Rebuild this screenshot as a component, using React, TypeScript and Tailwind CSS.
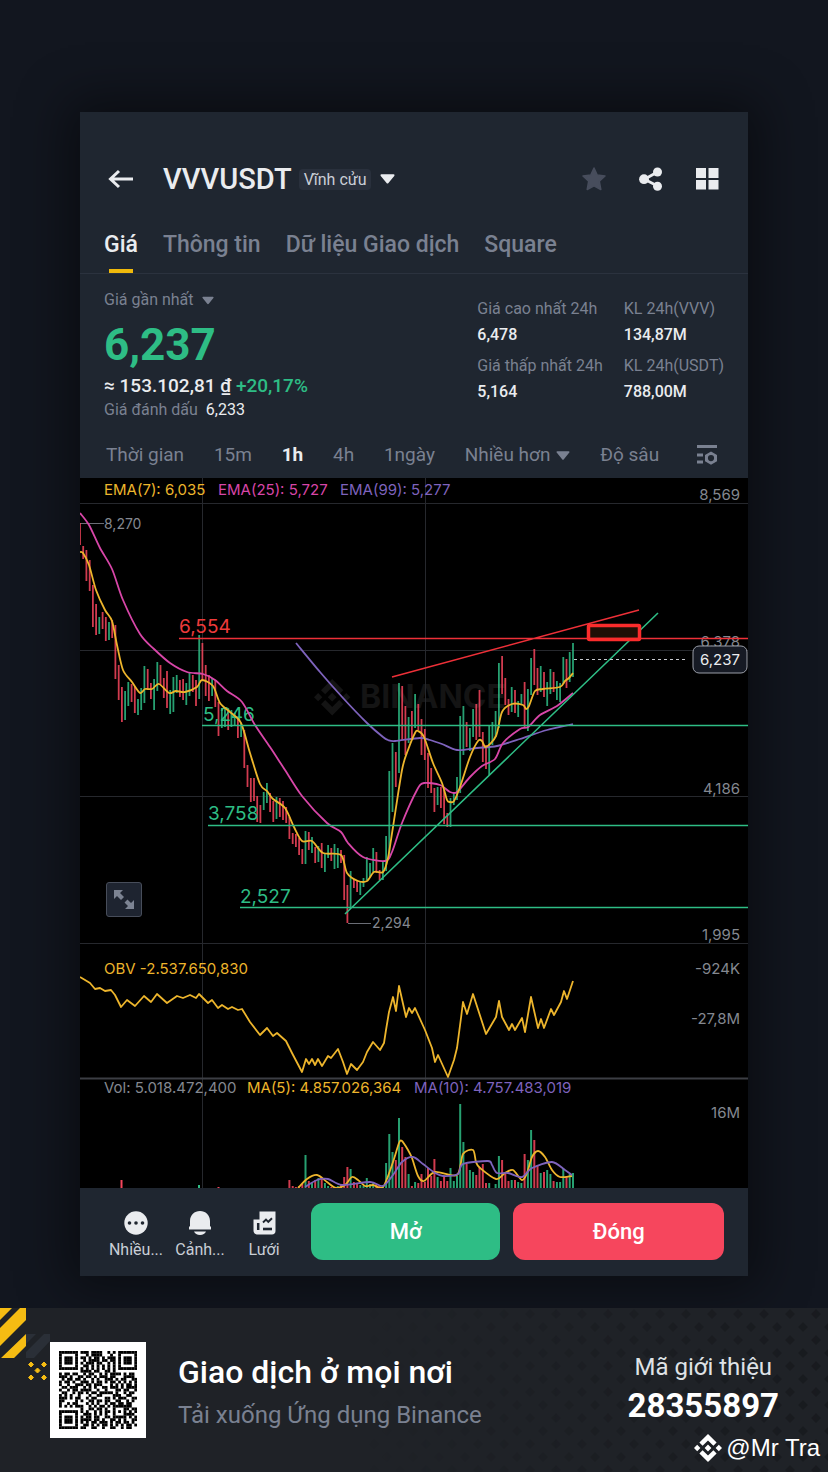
import React from 'react';

type Candle = [high: number, low: number, up: 0 | 1];
type Point = [x: number, y: number];

const CANDLE_STEP = 3.222;
const GREEN = '#2ebd85';
const RED = '#f6465d';
const YELLOW = '#edb52c';
const PINK = '#d846a8';
const PURPLE = '#7e63bd';

const candles: Candle[] = [
  [45, 67, 0], [68, 81, 0], [72, 103, 0], [82, 113, 0], [107, 149, 0], [126, 157, 0], [139, 156, 1], [134, 151, 0],
  [139, 163, 0], [144, 162, 1], [142, 160, 0], [147, 201, 0], [187, 222, 0], [209, 244, 0], [213, 242, 1], [204, 228, 1],
  [206, 224, 0], [209, 235, 0], [221, 237, 1], [210, 232, 1], [188, 225, 1], [191, 212, 0], [205, 221, 0], [201, 232, 1],
  [184, 213, 1], [187, 207, 0], [200, 220, 0], [193, 230, 0], [212, 236, 1], [199, 234, 1], [197, 215, 1], [202, 219, 0],
  [201, 222, 0], [205, 227, 1], [194, 218, 1], [197, 214, 0], [202, 228, 0], [157, 221, 1], [165, 202, 0], [187, 218, 0],
  [197, 223, 0], [200, 218, 1], [202, 229, 0], [224, 258, 0], [230, 250, 1], [229, 249, 1], [230, 252, 0], [232, 249, 1],
  [235, 247, 1], [239, 260, 0], [245, 259, 1], [252, 290, 0], [287, 309, 0], [300, 324, 0], [300, 323, 0], [318, 344, 0],
  [327, 345, 0], [314, 332, 1], [305, 325, 1], [315, 334, 0], [323, 344, 0], [319, 341, 1], [320, 339, 0], [323, 342, 0],
  [329, 345, 0], [339, 361, 0], [355, 366, 0], [356, 369, 0], [360, 377, 0], [371, 386, 0], [353, 386, 1], [354, 372, 0],
  [359, 375, 1], [369, 385, 0], [368, 384, 1], [365, 390, 0], [376, 394, 1], [367, 380, 1], [370, 383, 0], [366, 391, 1],
  [370, 390, 1], [372, 385, 0], [377, 422, 0], [407, 445, 0], [393, 430, 1], [401, 410, 0], [403, 414, 0], [404, 417, 1],
  [400, 409, 1], [379, 402, 1], [385, 399, 1], [370, 394, 1], [374, 395, 0], [392, 402, 0], [384, 402, 1], [358, 393, 1],
  [293, 380, 1], [265, 334, 1], [274, 309, 0], [205, 295, 1], [208, 262, 0], [228, 277, 0], [239, 265, 1], [233, 262, 0],
  [216, 250, 1], [226, 252, 0], [241, 277, 0], [251, 282, 0], [275, 310, 0], [290, 315, 0], [310, 334, 0], [309, 327, 1],
  [309, 330, 0], [312, 346, 0], [335, 349, 0], [320, 349, 1], [314, 327, 1], [299, 322, 1], [238, 315, 1], [228, 277, 1],
  [244, 269, 0], [250, 273, 1], [231, 259, 1], [226, 262, 0], [212, 259, 0], [254, 284, 0], [267, 291, 0], [248, 297, 1],
  [244, 267, 1], [233, 259, 1], [185, 250, 1], [178, 216, 0], [200, 227, 0], [221, 237, 0], [209, 234, 1], [212, 235, 0],
  [223, 239, 1], [216, 227, 1], [204, 250, 0], [211, 253, 1], [180, 217, 1], [171, 207, 0], [190, 217, 0], [188, 214, 1],
  [194, 219, 0], [204, 228, 1], [191, 216, 1], [194, 214, 0], [203, 222, 1], [205, 224, 1], [179, 206, 1], [181, 210, 0],
  [174, 204, 1], [165, 199, 1],
];

// bar heights, starting at candle VOLUME_START
const VOLUME_START = 65;
const volumes = [
  8, 2, 1, 2, 4, 33, 7, 5, 8, 10, 9, 5, 2, 1, 1, 2, 3, 11, 21, 19, 6, 4, 3, 2, 10, 4, 5, 4, 3, 3, 25, 54, 36, 28, 70,
  41, 31, 14, 2, 6, 5, 14, 6, 20, 12, 29, 11, 7, 11, 7, 20, 7, 12, 84, 46, 24, 18, 16, 13, 21, 24, 5, 5, 0, 4, 32, 28,
  14, 7, 8, 8, 6, 5, 34, 28, 58, 48, 23, 15, 16, 18, 14, 7, 6, 6, 20, 12, 14, 15,
];

const ema7: Point[] = [
  [0, 74], [3, 75], [9, 87], [16, 112], [25, 132], [32, 143], [37, 167], [43, 192], [52, 204], [60, 215], [65, 211],
  [72, 211], [79, 206], [89, 215], [96, 213], [105, 214], [117, 209], [122, 202], [133, 208], [140, 225], [150, 234],
  [161, 245], [170, 275], [180, 306], [187, 313], [193, 321], [205, 330], [214, 349], [222, 363], [232, 363], [243, 375],
  [261, 377], [267, 395], [278, 403], [287, 403], [294, 394], [303, 394], [308, 380], [313, 349], [322, 292], [328, 272],
  [335, 255], [338, 253], [344, 259], [353, 285], [362, 305], [367, 322], [370, 324], [374, 323], [380, 309], [390, 279],
  [398, 263], [402, 263], [406, 269], [416, 258], [422, 234], [432, 226], [443, 227], [446, 231], [449, 228], [455, 213],
  [463, 211], [480, 209], [485, 203], [489, 200], [493, 195],
];

const ema25: Point[] = [
  [0, 35], [9, 47], [20, 70], [32, 91], [43, 122], [60, 156], [74, 171], [90, 185], [107, 194], [123, 196], [135, 202],
  [147, 213], [162, 224], [175, 247], [190, 269], [205, 292], [222, 318], [247, 345], [261, 354], [268, 365], [283, 379],
  [305, 383], [312, 374], [322, 345], [337, 312], [344, 305], [360, 307], [370, 314], [377, 314], [390, 299], [402, 288],
  [415, 281], [423, 265], [440, 251], [448, 249], [460, 237], [477, 228], [493, 215],
];

const ema99: Point[] = [
  [216, 165], [240, 194], [263, 220], [287, 245], [303, 259], [308, 262], [315, 263], [340, 260], [350, 262], [362, 266],
  [377, 272], [397, 270], [417, 268], [440, 261], [467, 252], [493, 246],
];

const obv: Point[] = [
  [0, 499], [10, 505], [15, 511], [20, 510], [25, 513], [31, 512], [35, 517], [41, 529], [47, 522], [55, 528], [64, 518],
  [71, 524], [77, 516], [87, 525], [97, 518], [103, 520], [110, 517], [116, 520], [119, 516], [128, 525], [132, 522],
  [138, 530], [142, 527], [148, 531], [152, 529], [158, 532], [162, 531], [170, 544], [180, 557], [187, 550], [193, 558],
  [197, 555], [206, 563], [212, 575], [222, 594], [226, 581], [229, 586], [232, 581], [235, 587], [238, 581], [242, 588],
  [248, 578], [251, 580], [258, 571], [263, 584], [267, 596], [271, 586], [277, 592], [283, 584], [287, 574], [293, 564],
  [300, 572], [304, 565], [306, 552], [309, 534], [313, 519], [316, 533], [319, 508], [326, 539], [329, 530], [332, 535],
  [335, 530], [345, 552], [352, 570], [355, 584], [358, 577], [368, 599], [374, 582], [377, 570], [381, 540], [383, 524],
  [387, 536], [393, 516], [406, 556], [416, 539], [419, 523], [422, 539], [429, 552], [432, 546], [435, 552], [442, 540],
  [445, 554], [451, 519], [458, 550], [461, 541], [464, 550], [471, 531], [474, 537], [481, 524], [484, 513], [487, 521],
  [493, 503],
];

const volMa5: Point[] = [
  [218, 710], [227, 701], [237, 697], [247, 704], [256, 710], [265, 707], [272, 699], [278, 702], [285, 708], [293, 707],
  [303, 709], [313, 684], [319, 665], [322, 663], [328, 672], [332, 680], [338, 698], [344, 703], [355, 694], [377, 697],
  [383, 676], [393, 672], [396, 684], [400, 690], [416, 701], [425, 695], [433, 692], [442, 702], [447, 695], [452, 679],
  [458, 673], [465, 679], [472, 692], [480, 699], [492, 698],
];

const volMa10: Point[] = [
  [225, 709], [237, 702], [248, 701], [262, 707], [290, 704], [303, 708], [313, 697], [322, 684], [333, 679], [343, 686],
  [355, 695], [363, 698], [378, 696], [383, 686], [408, 683], [412, 687], [417, 695], [428, 695], [442, 699], [452, 690],
  [472, 684], [485, 692], [492, 697],
];

const qrRows = [
  '#######.###.####..#.#.#######',
  '#.....#...#.####...#..#.....#',
  '#.###.#.##.#.##.#.###.#.###.#',
  '#.###.#..#.####.##.##.#.###.#',
  '#.###.#.#.###.##..#.#.#.###.#',
  '#.....#..##.#.#.#.#.#.#.....#',
  '#######.#.#.#.#.#.#.#.#######',
  '........####.##..##.#........',
  '#.##.##..#.##..#.#.####.#.##.',
  '###.#..##.##.#.###.##...####.',
  '.#.##.##.#..#.#..###.#.##..##',
  '#.##.#..###.#.##.#.##.#.#.#.#',
  '#..#..###.##.###...#.#.#.##.#',
  '.##.###..#.#.#..##.###.#.####',
  '#..#.##.####..#..#...##.##..#',
  '.##..#.##.#.##.#####.#..#.##.',
  '#.#.#..#...#..##....###..##..',
  '###.#.##..#.##...##.#.###..##',
  '##....#.#..##.##.##..##..#.#.',
  '#..#.##...#.#.#..#.##.##.##..',
  '#.#.#.###..#.#.##.#.#######..',
  '........#..##.##.#..#...##.##',
  '#######.#.#..#.#.##.#.#.#.#.#',
  '#.....#..###.#.#.#..#...####.',
  '#.###.#.#.##.##..##.#####.#.#',
  '#.###.#.####.##.#..##.#.#..##',
  '#.###.#.#.#.##.###.#.##.##.#.',
  '#.....#..##.#.#.##.#.#.#.##.#',
  '#######.##..##..#..##..#.##..',
];

const stats = [
  { label: 'Giá cao nhất 24h', value: '6,478' },
  { label: 'KL 24h(VVV)', value: '134,87M' },
  { label: 'Giá thấp nhất 24h', value: '5,164' },
  { label: 'KL 24h(USDT)', value: '788,00M' },
];

const toPoints = (points: Point[]) => points.map((p) => p.join(',')).join(' ');

// Catmull-Rom through the points, written as cubic beziers
const toCurve = (points: Point[]) => {
  let d = `M${points[0].join(' ')}`;
  for (let i = 0; i < points.length - 1; i++) {
    const p0 = points[i - 1] ?? points[i];
    const p1 = points[i];
    const p2 = points[i + 1];
    const p3 = points[i + 2] ?? p2;
    const c1 = [p1[0] + (p2[0] - p0[0]) / 7, p1[1] + (p2[1] - p0[1]) / 7];
    const c2 = [p2[0] - (p3[0] - p1[0]) / 7, p2[1] - (p3[1] - p1[1]) / 7];
    d += `C${[...c1, ...c2, ...p2].map((n) => n.toFixed(1)).join(' ')}`;
  }
  return d;
};

const Caret: React.FC<{ className: string }> = ({ className }) => (
  <svg viewBox="0 0 16 12" className={className} fill="currentColor" aria-hidden="true">
    <path d="M1.500 1h13c1 0 1.300 1 .7 1.700l-6.200 7.600c-.6.8-1.500.8-2 0L.8 2.700C.2 2 .5 1 1.500 1z" />
  </svg>
);

const BinanceMark: React.FC = () => (
  <svg viewBox="0 0 28 28" width="28" height="28" fill="currentColor" aria-hidden="true">
    <path d="M14 0l8.600 8.600-3.200 3.200L14 6.400l-5.400 5.400-3.200-3.200z" />
    <path d="M14 28l8.600-8.600-3.200-3.200-5.400 5.400-5.400-5.400-3.200 3.200z" />
    <path d="M3.200 10.800L6.400 14l-3.200 3.200L0 14zM24.800 10.800L28 14l-3.200 3.200-3.200-3.200zM14 10.600l3.400 3.400-3.400 3.400-3.400-3.400z" />
  </svg>
);

const Header: React.FC = () => (
  <header className="flex h-12 items-center pl-7 pr-[29px] text-[#eaecef]">
    <button type="button" aria-label="Quay lại">
      <svg viewBox="0 0 26 20" className="h-5 w-[26px]" fill="none" stroke="currentColor" strokeWidth="3">
        <path d="M25 10H3M11 2L2.500 10l8.500 8" />
      </svg>
    </button>
    <h1 className="ml-[29px] pt-0.5 text-[29px] font-medium">VVVUSDT</h1>
    <button type="button" className="ml-[7px] flex items-center gap-[9px]">
      <span className="rounded-sm bg-[#29303c] px-[5px] text-[16px] leading-[21px] text-[#c9ced6]">Vĩnh cửu</span>
      <Caret className="h-3 w-[15px]" />
    </button>
    <div className="ml-auto flex items-center gap-[33px]">
      <button type="button" aria-label="Yêu thích" className="text-[#474d5c]">
        <svg viewBox="0 0 24 24" className="size-6" fill="currentColor" stroke="currentColor" strokeWidth="1.500" strokeLinejoin="round">
          <path d="M12 1l3.200 7 7.800.9-5.700 5.300 1.500 8.300L12 18.900l-6.800 3.600 1.500-8.300L1 8.900 8.800 8z" />
        </svg>
      </button>
      <button type="button" aria-label="Chia sẻ">
        <svg viewBox="0 0 24 24" className="size-6" fill="currentColor" stroke="currentColor">
          <path d="M18.500 5L5.500 12.200l13 6.800" fill="none" strokeWidth="2.800" />
          <circle cx="18.500" cy="5" r="4.500" stroke="none" />
          <circle cx="5" cy="12.200" r="4.900" stroke="none" />
          <circle cx="18.500" cy="19.200" r="4.500" stroke="none" />
        </svg>
      </button>
      <button type="button" aria-label="Bố cục">
        <svg viewBox="0 0 23 22" className="h-[22px] w-[23px]" fill="currentColor">
          <path d="M0 0h10v10H0zM12.500 0h10v10h-10zM0 12h10v9.500H0zM12.500 12h10v9.500h-10z" />
        </svg>
      </button>
    </div>
  </header>
);

const Tabs: React.FC = () => (
  <nav className="mt-7 flex gap-[25px] border-b border-[#2b323e] pl-6 text-[23px] font-medium leading-7 text-[#7a8191]">
    <a href="#gia" className="flex flex-col items-center text-[#eaecef]">
      Giá
      <span className="mt-2.5 h-1 w-6 bg-[#f0b90b]" />
    </a>
    <a href="#thong-tin">Thông tin</a>
    <a href="#du-lieu">Dữ liệu Giao dịch</a>
    <a href="#square">Square</a>
  </nav>
);

const PriceSummary: React.FC = () => (
  <section className="flex justify-between pl-6 pr-6 pt-4 text-[16px] leading-5 text-[#7a8191]">
    <div>
      <button type="button" className="flex items-center gap-2">
        Giá gần nhất
        <Caret className="h-[9px] w-3" />
      </button>
      <p className="mt-3 text-[44px] font-bold leading-[46px] text-[#2ebd85]">6,237</p>
      <p className="mt-1.5 text-[19px] font-medium leading-6 text-[#eaecef]">
        ≈ 153.102,81 ₫ <span className="text-[#2ebd85]">+20,17%</span>
      </p>
      <p className="mt-0.5">
        Giá đánh dấu <span className="ml-1 text-[#eaecef]">6,233</span>
      </p>
    </div>
    <dl className="mt-[9px] grid grid-cols-[auto_auto] content-start gap-x-[21px] gap-y-[11px]">
      {stats.map((stat) => (
        <div key={stat.label}>
          <dt>{stat.label}</dt>
          <dd className="mt-1.5 font-medium text-[#eaecef]">{stat.value}</dd>
        </div>
      ))}
    </dl>
  </section>
);

const Intervals: React.FC = () => (
  <div className="mt-[23px] flex items-center justify-between pb-[11px] pl-[26px] pr-[30px] text-[19px] leading-6 text-[#7a8191]">
    <button type="button">Thời gian</button>
    <button type="button">15m</button>
    <button type="button" className="font-bold text-[#eaecef]">1h</button>
    <button type="button">4h</button>
    <button type="button">1ngày</button>
    <button type="button" className="flex items-center gap-1.5">
      Nhiều hơn
      <Caret className="h-[11px] w-3.5" />
    </button>
    <button type="button">Độ sâu</button>
    <button type="button" aria-label="Cài đặt biểu đồ" className="ml-2">
      <svg viewBox="0 0 21 20" className="h-5 w-[21px]" fill="currentColor">
        <path d="M0 0h20v3H0zM0 8.500h6v3H0zM0 15.500h6v3H0z" />
        <path
          fillRule="evenodd"
          d="M14 6.500l6 3.400v6.400l-6 3.500-6-3.500V9.900zM14 10a3.100 3.100 0 100 6.200 3.100 3.100 0 000-6.200z"
        />
      </svg>
    </button>
  </div>
);

const Chart: React.FC = () => (
  <svg viewBox="0 0 668 710" className="block w-full bg-black font-[family-name:Inter,sans-serif] text-[15px]" role="img" aria-label="Biểu đồ VVVUSDT 1h">
    <g fill="#141414">
      <g transform="translate(234 201) scale(1.300)">
        <path d="M14 0l8.600 8.600-3.200 3.200L14 6.400l-5.400 5.400-3.200-3.200zM14 28l8.600-8.600-3.200-3.200-5.400 5.400-5.400-5.400-3.200 3.200zM3.200 10.800L6.400 14l-3.200 3.200L0 14zM24.800 10.800L28 14l-3.200 3.200-3.200-3.200zM14 10.600l3.400 3.400-3.400 3.400-3.400-3.400z" />
      </g>
      <text x="280" y="230" className="text-[32px] font-bold">BINANCE</text>
    </g>

    <g stroke="#26282d">
      <path d="M122.500 0V710M345.500 0V710M0 25.500H668M0 172.500H668M0 318.500H668M0 465.500H668" />
      <path d="M0 600.500H668" stroke="#3c3e44" strokeWidth="2" />
    </g>

    <g fill="#848890" textAnchor="end">
      <text x="660" y="22">8,569</text>
      <text x="660" y="169">6,378</text>
      <text x="660" y="316">4,186</text>
      <text x="660" y="462">1,995</text>
      <text x="660" y="496">-924K</text>
      <text x="660" y="546">-27,8M</text>
      <text x="660" y="640">16M</text>
    </g>

    <text x="24" y="17" fill={YELLOW}>EMA(7): 6,035</text>
    <text x="138" y="17" fill={PINK}>EMA(25): 5,727</text>
    <text x="260" y="17" fill={PURPLE}>EMA(99): 5,277</text>

    <g fill="#848890" className="text-[14px]">
      <path d="M0 45.500H24M268 445.500H291" stroke="#6a6d75" />
      <text x="24" y="51">8,270</text>
      <text x="292" y="450">2,294</text>
    </g>

    <g strokeWidth="1.800">
      {candles.map(([high, low, up], i) => (
        <path
          key={i}
          d={`M${(i * CANDLE_STEP).toFixed(1)} ${high}V${low}`}
          stroke={up ? GREEN : RED}
          opacity="0.85"
        />
      ))}
    </g>

    <g className="text-[19px]">
      <text x="99" y="155" fill="#ee3b3b">6,554</text>
      <text x="123" y="243" fill={GREEN}>5,246</text>
      <text x="128" y="342" fill={GREEN}>3,758</text>
      <text x="160" y="425" fill={GREEN}>2,527</text>
    </g>

    <g fill="none" strokeWidth="1.800" strokeLinejoin="round">
      <path d={toCurve(ema99)} stroke={PURPLE} />
      <path d={toCurve(ema25)} stroke={PINK} />
      <path d={toCurve(ema7)} stroke={YELLOW} />
      <polyline points={toPoints(obv)} stroke={YELLOW} />
    </g>

    <g stroke={GREEN} strokeWidth="1.600">
      <path d="M122 247.500H668M128 347.500H668M160 429.500H668M265 436L578 135" />
    </g>
    <rect x="508.500" y="147.500" width="51" height="14" fill="#1f0f06" />
    <g stroke="#ee3038" strokeWidth="1.600">
      <path d="M99 160.500H668M312 199L559 132" />
    </g>
    <rect x="508.500" y="147.500" width="51" height="14" rx="1" fill="none" stroke="#fb2c2c" strokeWidth="3.500" />

    <path d="M494 181.500H608" stroke="#c8cad0" strokeDasharray="3 3" />
    <rect x="613" y="168" width="54" height="27" rx="6" fill="#161a24" stroke="#9a9ea8" />
    <text x="640" y="187" fill="#eaecef" textAnchor="middle">6,237</text>

    <text x="24" y="496" fill={YELLOW}>OBV -2.537.650,830</text>
    <text x="24" y="615" fill="#848890">Vol: 5.018.472,400</text>
    <text x="167" y="615" fill={YELLOW}>MA(5): 4.857.026,364</text>
    <text x="334" y="615" fill={PURPLE}>MA(10): 4.757.483,019</text>

    <g strokeWidth="2">
      <path d="M41.500 702V710" stroke={RED} />
      <path d="M119 707V710" stroke={GREEN} />
      <path d="M138.500 709V710" stroke={RED} />
      {volumes.map((height, i) => (
        <path
          key={i}
          d={`M${((i + VOLUME_START) * CANDLE_STEP).toFixed(1)} ${710 - height}V710`}
          stroke={candles[i + VOLUME_START][2] ? GREEN : RED}
          opacity="0.85"
        />
      ))}
    </g>
    <g fill="none" strokeWidth="1.800" strokeLinejoin="round">
      <path d={toCurve(volMa5)} stroke={YELLOW} />
      <path d={toCurve(volMa10)} stroke={PURPLE} />
    </g>

    <g transform="translate(26 404)">
      <rect x="0.500" y="0.500" width="35" height="34" rx="2.500" fill="#1e2430" stroke="#474d5a" />
      <path fill="#7c8392" d="M8 8h9l-3 3 4 4-3 3-4-4-3 3zM28 27h-9l3-3-3.500-3.500 3-3L25 21l3-3z" />
    </g>
  </svg>
);

const ActionBar: React.FC = () => (
  <footer className="flex items-end px-6 pb-4 pt-[15px] text-[16px] leading-5 text-[#c9ced6]">
    <button type="button" className="flex w-16 flex-col items-center gap-[5px]">
      <svg viewBox="0 0 24 24" className="size-6" fill="#eaecef">
        <circle cx="12" cy="12" r="11.700" />
        <g fill="#1f2630">
          <circle cx="5.500" cy="12" r="1.800" />
          <circle cx="12" cy="12" r="1.800" />
          <circle cx="18.500" cy="12" r="1.800" />
        </g>
      </svg>
      Nhiều...
    </button>
    <button type="button" className="flex w-16 flex-col items-center gap-[5px]">
      <svg viewBox="0 0 24 24" className="size-6" fill="#eaecef">
        <path d="M1 18.500v-3h1V10C2 4 6.500 0 12 0s10 4 10 10v5.500h1v3zM6 20.500h12c-1 2-3 3.500-6 3.500s-5-1.500-6-3.500z" />
      </svg>
      Cảnh...
    </button>
    <button type="button" className="flex w-16 flex-col items-center gap-[5px]">
      <svg viewBox="0 0 24 24" className="size-6" fill="#eaecef">
        <path d="M7.500.5h16V20c0 2-1.300 3.500-3.500 3.500H6C3 23.500 1.500 22 1.500 19.500V8.500h6z" />
        <g fill="none" stroke="#1f2630">
          <path d="M6.200 12v7" strokeWidth="2.500" />
          <path d="M11 18h9" strokeWidth="2.600" />
          <path d="M11 11.500l3-3 2.300 2.300L20 7.200" strokeWidth="1.900" />
        </g>
      </svg>
      Lưới
    </button>
    <button type="button" className="ml-[15px] h-[57px] flex-[9] rounded-xl bg-[#2ebd85] text-[22px] font-medium text-white">
      Mở
    </button>
    <button type="button" className="ml-[13px] h-[57px] flex-[10] rounded-xl bg-[#f6465d] text-[22px] font-medium text-white">
      Đóng
    </button>
  </footer>
);

const QrCode: React.FC = () => (
  <svg viewBox="0 0 29 29" className="size-[78px]" role="img" aria-label="QR">
    {qrRows.map((row, y) =>
      row.split('').map((cell, x) => (cell === '#' ? <rect key={`${x}-${y}`} x={x} y={y} width="1.050" height="1.050" /> : null)),
    )}
  </svg>
);

const Banner: React.FC = () => (
  <section className="relative mt-8 flex h-[164px] items-center overflow-hidden bg-[#1f2227] pl-[50px] pr-[49px]">
    <svg className="absolute inset-y-0 right-0 h-full w-[460px]" aria-hidden="true">
      <defs>
        <pattern id="dots" width="26" height="26" patternUnits="userSpaceOnUse">
          <path d="M6 1l5 5-5 5-5-5zM19 14l5 5-5 5-5-5z" fill="#17191d" />
        </pattern>
        <linearGradient id="fade">
          <stop offset="0" stopColor="#fff" stopOpacity="0" />
          <stop offset="1" stopColor="#fff" stopOpacity="0.800" />
        </linearGradient>
        <mask id="fadeMask">
          <rect width="100%" height="100%" fill="url(#fade)" />
        </mask>
      </defs>
      <rect width="100%" height="100%" fill="url(#dots)" mask="url(#fadeMask)" />
    </svg>
    <svg viewBox="0 0 50 80" className="absolute left-0 top-0 h-20 w-[50px]" aria-hidden="true">
      <g fill="#f5bc13">
        <path d="M0 0h12L0 12zM20 0h6v12L0 38V20zM26 26v12L14 50H1z" />
        <path
          d="M31 54l2.500 2.500L31 59l-2.500-2.500zM44 54l2.500 2.500L44 59l-2.500-2.500zM37.500 60l2.500 2.500-2.500 2.500-2.500-2.500zM31 67l2.500 2.500L31 72l-2.500-2.500zM44 67l2.500 2.500L44 72l-2.500-2.500z"
          stroke="#f5bc13"
          strokeLinejoin="round"
        />
      </g>
      <path d="M26 26h10L26 36zM44 26h6v7L34 50h-8v-6z" fill="#2a2f37" />
    </svg>
    <div className="relative bg-white p-[9px]">
      <QrCode />
    </div>
    <div className="relative ml-8 pt-1.5">
      <h2 className="text-[32px] font-medium leading-10 text-white">Giao dịch ở mọi nơi</h2>
      <p className="mt-1 text-[24px] leading-[38px] text-[#7a8191]">Tải xuống Ứng dụng Binance</p>
    </div>
    <div className="relative ml-auto text-center text-white">
      <p className="text-[24px] leading-8 text-[#dfe2e6]">Mã giới thiệu</p>
      <p className="text-[33px] font-bold leading-[46px]">28355897</p>
    </div>
    <p className="absolute bottom-2 right-2 flex items-center gap-1 font-[family-name:'Liberation_Sans',sans-serif] text-[24px] leading-8 text-white">
      <BinanceMark />
      @Mr Tra
    </p>
  </section>
);

const App: React.FC = () => (
  <div className="bg-[#12161f] pt-28 font-[family-name:Roboto,sans-serif]">
    <main className="mx-20 bg-[#1f2630] pt-[43px] shadow-[0_0_48px_12px_rgba(0,0,0,0.45)]">
      <Header />
      <Tabs />
      <PriceSummary />
      <Intervals />
      <Chart />
      <ActionBar />
    </main>
    <Banner />
  </div>
);

export default App;
